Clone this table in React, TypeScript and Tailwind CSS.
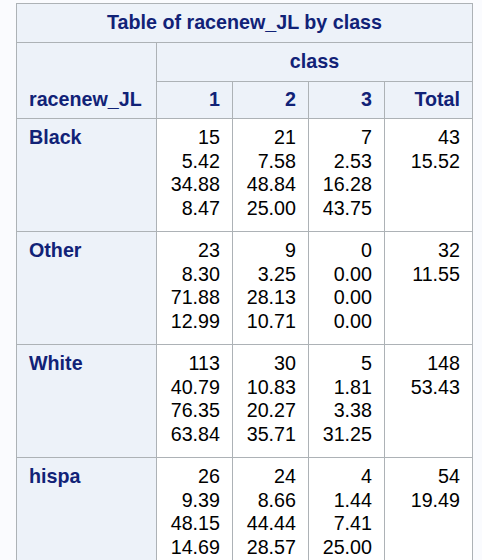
const font = { fontFamily: '"Liberation Sans", Arial, sans-serif' };

type Row = {
  label: string;
  cells: string[][];
  total: string[];
};

const rows: Row[] = [
  {
    label: "Black",
    cells: [
      ["15", "5.42", "34.88", "8.47"],
      ["21", "7.58", "48.84", "25.00"],
      ["7", "2.53", "16.28", "43.75"],
    ],
    total: ["43", "15.52"],
  },
  {
    label: "Other",
    cells: [
      ["23", "8.30", "71.88", "12.99"],
      ["9", "3.25", "28.13", "10.71"],
      ["0", "0.00", "0.00", "0.00"],
    ],
    total: ["32", "11.55"],
  },
  {
    label: "White",
    cells: [
      ["113", "40.79", "76.35", "63.84"],
      ["30", "10.83", "20.27", "35.71"],
      ["5", "1.81", "3.38", "31.25"],
    ],
    total: ["148", "53.43"],
  },
  {
    label: "hispa",
    cells: [
      ["26", "9.39", "48.15", "14.69"],
      ["24", "8.66", "44.44", "28.57"],
      ["4", "1.44", "7.41", "25.00"],
    ],
    total: ["54", "19.49"],
  },
];

const head = "border-r border-b border-[#adb2b6] bg-[#edf2f9] font-bold text-[#112277]";
const data = "border-r border-b border-[#adb2b6] bg-white text-black text-right px-[12px] pt-[7px]";

export default function App() {
  return (
    <div className="min-h-screen bg-[#fafbfe] pt-[3px] pl-[16px]" style={font}>
      <div className="grid w-[457px] grid-cols-[140px_76px_76px_76px_88px] border-l border-t border-[#adb2b6] text-[19.7px] leading-[23.67px]">
        <div className={`${head} col-span-5 flex h-[39px] items-center justify-center`}>
          Table of racenew_JL by class
        </div>

        <div className={`${head} row-span-2 flex items-end px-[12px] pb-[6px]`}>racenew_JL</div>
        <div className={`${head} col-span-4 flex h-[39px] items-center justify-center`}>class</div>

        {["1", "2", "3", "Total"].map((h) => (
          <div key={h} className={`${head} flex h-[37px] items-center justify-end px-[12px]`}>
            {h}
          </div>
        ))}

        {rows.map((r) => (
          <div key={r.label} className="contents">
            <div className={`${head} h-[113px] px-[12px] pt-[7px]`}>{r.label}</div>
            {r.cells.map((c, i) => (
              <div key={i} className={data}>
                {c.map((v, j) => (
                  <div key={j}>{v}</div>
                ))}
              </div>
            ))}
            <div className={data}>
              {r.total.map((v, j) => (
                <div key={j}>{v}</div>
              ))}
            </div>
          </div>
        ))}
      </div>
    </div>
  );
}
